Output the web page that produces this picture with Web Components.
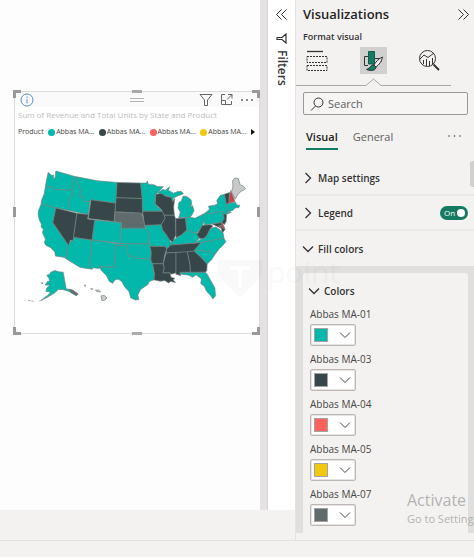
<!DOCTYPE html>
<html lang="en">
<head>
<meta charset="utf-8">
<meta name="viewport" content="width=device-width, initial-scale=1">
<title>Visualizations</title>
<style>
html, body { margin: 0; height: 100%; }
body { font-family: "Open Sans", "Noto Sans", sans-serif; color: #333; background: #fdfdfd; --panel: #f3f2f1; --line: #e3e2e1; --green: #147a61; }
</style>
</head>
<body>
<report-app></report-app>
<script>
const define = (name, html, setup) => {
  const template = document.createElement('template');
  template.innerHTML = '<style>*{box-sizing:border-box}button{font:inherit;color:inherit;background:none;border:0;padding:0;margin:0}svg{display:block;fill:none;stroke:currentColor}</style>' + html;
  customElements.define(name, class extends HTMLElement {
    connectedCallback() {
      if (this.shadowRoot) return;
      this.attachShadow({ mode: 'open' }).append(template.content.cloneNode(true));
      if (setup) setup(this, this.shadowRoot);
    }
  });
};

define('us-map', `
<style>
:host{display:block}
svg{width:100%;stroke:#71827f;stroke-width:2;stroke-linejoin:round}
.t{fill:#01b8aa}.d{fill:#374649}.g{fill:#5f6b6d}.r{fill:#c9434b}.n{fill:#c9c9c9}
</style>
<svg viewBox="0 0 690 450" role="img" aria-label="Map of the United States by product">
<g class="t">
<path d="M84 52L95 61 101 60 99 71 105 68 107 48 163 64 155 104 135 105 118 104 104 103 97 96 76 94 79 76Z"/>
<path d="M76 94L97 96 104 103 118 104 155 104 159 111 150 126 143 165 107 158 63 147 64 136 72 117Z"/>
<path d="M63 147L107 158 98 202 145 270 140 286 142 297 134 306 106 302 104 290 92 277 78 270 73 262 76 251 67 232 70 222 63 215 64 207 57 192 54 176 56 164Z"/>
<path d="M163 64L174 66 171 83 182 106 178 122 187 123 191 138 209 139 204 178 143 165 150 126 159 111 155 104Z"/>
<path d="M174 66L230 77 290 82 286 144 212 134 209 139 191 138 187 123 178 122 182 106 171 83Z"/>
<path d="M223 194L303 202 300 264 215 254Z"/>
<path d="M160 246L215 254 207 340 180 336 134 308 142 297 140 286 145 270 152 256 158 256Z"/>
<path d="M215 254L287 264 283 335 236 334 237 339 217 337 216 341 207 340Z"/>
<path d="M303 218L374 218 378 222 381 226 386 237 386 266 300 264Z"/>
<path d="M287 264L386 266 392 290 391 314 371 309 354 310 338 304 322 300 320 272 287 270Z"/>
<path d="M287 270L320 272 322 300 338 304 354 310 371 309 391 314 396 325 398 340 402 356 400 373 386 378 382 387 360 402 352 418 355 432 345 433 331 427 325 407 314 396 304 378 294 371 284 373 277 383 267 378 258 360 245 347 236 334 283 335Z"/>
<path d="M360 84L378 84 380 78 384 88 400 89 410 94 428 95 406 117 404 132 404 146 412 156 426 168 366 168 365 130Z"/>
<path d="M372 210L422 208 426 224 437 238 447 254 452 267 446 273 438 281 434 273 388 273 386 237 378 222Z"/>
<path d="M411 113L426 103 434 105 447 95 443 105 458 114 472 109 482 109 488 116 474 121 461 127 455 137 450 126Z"/>
<path d="M474 188L479 171 472 158 475 141 482 138 487 123 498 124 511 134 513 147 507 155 515 151 520 166 513 180 508 186Z"/>
<path d="M494 188L508 186 523 189 548 176 551 195 545 210 539 220 528 233 515 231 498 224Z"/>
<path d="M450 269L452 260 466 249 482 239 498 224 515 231 528 233 540 245 522 263 489 266Z"/>
<path d="M522 263L538 253 550 249 559 239 565 226 575 217 585 215 597 223 607 234 609 248 540 262Z"/>
<path d="M540 262L609 248 615 259 605 271 596 279 581 299 565 286 550 289 545 284 519 287 529 275Z"/>
<path d="M519 287L545 284 550 289 565 286 581 299 572 313 559 326 540 305Z"/>
<path d="M478 350L508 350 553 350 559 356 569 374 582 397 584 421 576 430 569 419 557 407 551 393 540 384 542 370 526 358 515 365 505 359 482 356Z"/>
<path d="M548 176L556 171 558 176 603 168 612 178 610 192 604 201 551 209Z"/>
<path d="M556 171L566 162 563 153 582 150 590 146 588 136 598 121 611 117 616 146 619 171 631 171 613 179 603 168 558 176Z"/>
<path d="M616 146L644 141 647 149 656 150 654 157 643 158 636 165 619 171Z"/>
<path d="M80 359L88 357 92 350 104 345 116 349 129 350 138 400 147 401 158 405 172 415 168 420 145 407 128 402 114 402 105 411 92 419 78 427 64 433 84 418 91 410 77 407 81 396 90 389 75 388 82 378 88 377 87 369Z"/>
</g>
<g class="d">
<path d="M107 158L170 174 160 247 158 256 151 254 145 270 98 202Z"/>
<path d="M170 174L204 178 202 191 223 194 215 254 160 246Z"/>
<path d="M212 134L286 144 281 199 204 190Z"/>
<path d="M290 82L360 84 365 130 287 128Z"/>
<path d="M287 128L365 130 366 179 358 173 345 173 284 170Z"/>
<path d="M366 168L426 168 434 188 422 208 372 210Z"/>
<path d="M388 273L434 273 438 281 432 300 428 325 396 325 391 314 392 290Z"/>
<path d="M396 325L428 325 431 337 427 352 448 352 451 365 463 369 457 373 465 381 450 378 444 382 432 375 419 377 400 373 402 356Z"/>
<path d="M406 117L422 115 436 123 452 127 456 139 462 131 459 155 461 180 430 180 424 165 404 146Z"/>
<path d="M430 180L461 180 464 188 466 238 456 260 447 254 437 238 426 224 422 208 434 188Z"/>
<path d="M465 190L494 188 498 224 482 239 466 247Z"/>
<path d="M438 281L446 273 450 269 489 266 540 262 519 287 500 290 436 293Z"/>
<path d="M436 293L466 291 466 352 452 356 448 352 427 352 431 337 428 325Z"/>
<path d="M466 291L500 289 508 328 509 350 478 350 480 360 466 356Z"/>
<path d="M500 289L519 287 540 305 559 326 558 346 553 350 509 350 508 328Z"/>
<path d="M545 210L570 208 576 212 566 224 559 239 550 249 538 250 528 238 539 220Z"/>
<path d="M574 206L603 202 608 219 613 221 605 233 600 217 593 215 585 211Z"/>
<path d="M607 174L617 179 616 198 610 208 603 201 610 190Z"/>
<path d="M611 117L626 112 624 144 616 146Z"/>
</g>
<path class="g" d="M284 170L345 173 358 173 366 180 374 218 303 218 303 202 281 199Z"/>
<path class="r" d="M630 106L642 139 624 144 626 119ZM603 202L612 219 608 221 602 215ZM594 209L602 211 598 219Z"/>
<path class="n" d="M632 110L636 94 635 77 641 69 652 70 658 90 665 91 674 101 660 109 651 117 643 132Z"/>
<g class="n"><path d="M242 421L251 419 260 427 251 435 244 434ZM225 404L234 403 241 409 230 408ZM211 399L218 400 214 402ZM191 389L196 389 195 393ZM64 381L69 382 67 385ZM24 434L31 435M34 436L41 437M58 436L67 434"/><path fill="#5f6b6d" d="M148 401L158 404 174 415 168 420 152 411Z"/></g>
</svg>`);

define('legend-item', `
<style>
:host{display:flex;align-items:center;gap:1px;white-space:nowrap}
i{width:7px;height:7px;border-radius:50%;background:var(--c)}
</style><i></i><span><slot></slot></span>`);

define('map-visual', `
<style>
:host{display:block;position:relative;border:1px solid #dcdcdc;background:#fff;color:#666}
header{display:flex;justify-content:space-between;align-items:center;height:15px;padding:0 5px;background:#fafafa}
header div{display:flex;gap:7px;align-items:center}
button{display:block}
.info{color:#5c8fc4}
h2{margin:0 0 0 3px;font-size:8px;line-height:16px;font-weight:400;color:#bdbdbd;white-space:nowrap;overflow:hidden}
.legend{display:flex;align-items:center;justify-content:space-between;margin:0 4px 0 3px;font-size:7px;line-height:18px;color:#444}
us-map{margin:14px 8px 0 5px;padding-bottom:27px}
.h{position:absolute;width:8px;height:8px;border:0 solid #999}
.tl{left:-2px;top:-2px;border-width:3px 0 0 3px}.tr{right:-1px;top:-2px;border-width:3px 3px 0 0}
.bl{left:-2px;bottom:-2px;border-width:0 0 3px 3px}.br{right:-1px;bottom:-2px;border-width:0 3px 3px 0}
.tm,.bm{left:calc(50% - 5px);width:10px;height:3px;background:#aaa}.tm{top:-2px}.bm{bottom:-2px}
.lm,.rm{top:calc(50% - 5px);width:3px;height:10px;background:#999}.lm{left:-2px}.rm{right:-1px}
.grip{position:absolute;left:calc(50% - 7px);top:6px;width:14px;height:4px;border:solid #b4b4b4;border-width:1px 0}
</style>
<header>
<button class="info" aria-label="Information"><svg width="14" height="14" viewBox="0 0 14 14"><circle cx="7" cy="7" r="6"/><path d="M7 6V10.500M7 3.500V5"/></svg></button>
<div>
<button aria-label="Filter"><svg width="14" height="14" viewBox="0 0 14 14"><path d="M1 1.500H13L8.500 7V12.500H5.500V7Z"/></svg></button>
<button aria-label="Focus mode"><svg width="13" height="13" viewBox="0 0 13 13"><path d="M5 1.500H1.500V11.500H11.500V8M8 1.500H12V5.500M12 1.500L7 6.500M1.500 7.500H5.500V11.500"/></svg></button>
<button aria-label="More options"><svg width="14" height="14" viewBox="0 0 14 14"><g fill="#666" stroke="none"><circle cx="2" cy="7" r="1"/><circle cx="7" cy="7" r="1"/><circle cx="12" cy="7" r="1"/></g></svg></button>
</div>
</header>
<h2>Sum of Revenue and Total Units by State and Product</h2>
<div class="legend"><span>Product</span>
<legend-item style="--c:#01b8aa">Abbas MA...</legend-item>
<legend-item style="--c:#374649">Abbas MA...</legend-item>
<legend-item style="--c:#fd625e">Abbas MA...</legend-item>
<legend-item style="--c:#f2c80f">Abbas MA...</legend-item>
<button aria-label="Next legend items"><svg width="4" height="6" viewBox="0 0 4 6"><path fill="#111" stroke="none" d="M0 0L4 3 0 6Z"/></svg></button></div>
<us-map></us-map>
<span class="grip"></span>
<i class="h tl"></i><i class="h tr"></i><i class="h bl"></i><i class="h br"></i><i class="h tm"></i><i class="h bm"></i><i class="h lm"></i><i class="h rm"></i>`);

define('filters-rail', `
<style>
:host{display:flex;flex-direction:column;align-items:center;gap:13px;width:27px;padding-top:9px;background:#fff}
button{display:block}
h2{margin:0;writing-mode:vertical-rl;font-size:12px;line-height:16px;font-weight:600;margin-top:-7px}
</style>
<button aria-label="Expand filters"><svg width="11" height="11" viewBox="0 0 11 11"><path d="M5.500 .5L.5 5.500 5.500 10.500M10.500 .5L5.500 5.500 10.500 10.500"/></svg></button>
<svg width="11" height="11" viewBox="0 0 11 11"><path stroke-width="1.200" d="M10 1V10L6 6.500H1V4.500H6Z"/></svg>
<h2>Filters</h2>`);

define('format-section', `
<style>
:host{display:flex;align-items:center;height:35px;padding:0 6px 0 8px;border-bottom:2px solid #eae9e8}
:host([open]){border:0}
button{display:flex;align-items:center;gap:6px;font-size:10px;line-height:16px;font-weight:600;flex:1}
:host([open]) svg{transform:rotate(90deg)}
</style>
<button><svg width="8" height="12" viewBox="0 0 8 12"><path stroke-width="1.300" d="M1.500 1L6.500 6 1.500 11"/></svg><slot></slot></button><slot name="end"></slot>`,
(el, root) => root.querySelector('button').setAttribute('aria-expanded', el.hasAttribute('open')));

define('toggle-switch', `
<style>
:host{display:block}
label{display:flex;align-items:center;justify-content:space-between;width:28px;height:14px;padding:0 3px 0 4px;border-radius:7px;background:var(--green);color:#fff;font-size:8px;line-height:14px}
input{appearance:none;width:8px;height:8px;margin:0;border-radius:50%;background:#fff}
</style>
<label>On<input type="checkbox" role="switch" checked aria-label="Legend"></label>`);

define('color-picker', `
<style>
:host{display:flex;flex-direction:column;align-items:flex-start;gap:2px;font-size:10px;line-height:16px;color:#484644}
button{display:flex;align-items:center;justify-content:space-between;width:46px;height:22px;padding:0 4px 0 3px;border:1px solid #bdb7b6;border-radius:2px;background:#fff;box-shadow:inset 0 0 0 1px #e6e2e1}
i{width:14px;height:14px;background:var(--c);border:1px solid #a7a3a2}
</style>
<span id="l"><slot></slot></span>
<button aria-labelledby="l" aria-haspopup="true"><i></i><svg width="12" height="8" viewBox="0 0 12 8"><path d="M1 1.500L6 6.500 11 1.500"/></svg></button>`);

define('format-pane', `
<style>
:host{display:flex;flex-direction:column;width:178px;background:var(--panel);position:relative}
.title{display:flex;justify-content:space-between;align-items:center;padding:4px 5px 0 7px}
h1{margin:0;font-size:13px;line-height:20px;font-weight:600;color:#252423}
.sub{margin:0;padding:5px 7px 0;font-size:9px;line-height:16px;font-weight:600}
.modes{display:flex;justify-content:space-between;margin:2px 31px 0 7px}
.modes button{display:grid;place-items:center;width:27px;height:27px}
.modes .on{background:#d0d0d0}
.notch{color:#a9a7a5}.notch svg{width:100%;height:12px}
.search{display:flex;align-items:center;gap:4px;height:23px;margin:6px 6px 0 7px;padding:0 6px;border:1px solid #999;border-radius:2px;background:#f6f5f4}
.search svg{flex:none}
input{flex:1;min-width:0;border:0;padding:0;background:none;font:inherit;font-size:11px;line-height:16px;outline:0}
input::placeholder{color:#605e5c;opacity:1}
.tabs{display:flex;align-items:flex-start;gap:15px;margin:13px 13px 11px 10px;font-size:11px;line-height:18px;color:#605e5c}
.tabs .on{font-weight:600;color:#252423;border-bottom:2px solid var(--green);padding-bottom:2px}
.tabs .more{margin-left:auto;padding-top:2px}
.body{flex:1;padding:7px 6px 0 7px;background:#e0dfde;margin-bottom:7px}
.card{display:flex;flex-direction:column;gap:5px;height:100%;padding:0 7px;border-radius:3px 3px 0 0;background:var(--panel)}
.card format-section{padding:0;margin-bottom:-7px;height:35px}
.thumb{position:absolute;right:0;top:161px;width:4px;height:26px;border-radius:3px 0 0 3px;background:#d2d0ce}
</style>
<div class="title"><h1>Visualizations</h1><button aria-label="Collapse"><svg width="11" height="11" viewBox="0 0 11 11"><path d="M.5 .5L5.500 5.500 .5 10.500M5.500 .5L10.500 5.500 5.500 10.500"/></svg></button></div>
<p class="sub">Format visual</p>
<div class="modes">
<button aria-label="Build visual"><svg width="22" height="22" viewBox="0 0 22 22"><path stroke-width="1.300" d="M1 1.500H17"/><path stroke-dasharray="2 1" d="M1 6.500H21V12.500H1ZM1 15.500H21V20.500H1Z"/></svg></button>
<button class="on" aria-label="Format visual"><svg width="22" height="22" viewBox="0 0 22 22"><path d="M6 6.500H2.500V15.500H6M12 8.500H19V12"/><path fill="#147a61" stroke="#105d4a" d="M6.500 1.500H12.500V14H6.500Z"/><path fill="#eee" d="M20.500 7C17 8.500 13.500 12 12 15L14 17C17 15 20 11 20.500 7Z"/><path fill="#147a61" stroke="#333" d="M12 15C9 14 9 18 4.500 19.500C9 21.500 14 20.500 14 17Z"/></svg></button>
<button aria-label="Analytics"><svg width="23" height="23" viewBox="0 0 23 23"><circle cx="9.500" cy="9.500" r="8"/><path d="M2 10L6 6 10 8.500 16 4M5.500 15V11M8.500 17V10M11.500 17V12M14.500 15V9"/><path stroke-width="2" d="M15.500 15.500L21 21"/></svg></button>
</div>
<div class="notch"><svg viewBox="0 0 178 12" preserveAspectRatio="none"><path d="M0 11.500H70L77.500 5 85 11.500H155"/></svg></div>
<label class="search"><svg width="14" height="14" viewBox="0 0 14 14"><circle cx="8.500" cy="5.500" r="4.500"/><path d="M5.500 9L1 13.500"/></svg><input type="search" placeholder="Search" aria-label="Search"></label>
<div class="tabs"><button class="on">Visual</button><button>General</button><button class="more" aria-label="More options"><svg width="13" height="12" viewBox="0 0 13 12"><g fill="#444" stroke="none"><circle cx="1" cy="6" r=".8"/><circle cx="6.500" cy="6" r=".8"/><circle cx="12" cy="6" r=".8"/></g></svg></button></div>
<format-section>Map settings</format-section>
<format-section>Legend<toggle-switch slot="end"></toggle-switch></format-section>
<format-section open>Fill colors</format-section>
<div class="body"><div class="card">
<format-section open>Colors</format-section>
<color-picker style="--c:#01b8aa">Abbas MA-01</color-picker>
<color-picker style="--c:#374649">Abbas MA-03</color-picker>
<color-picker style="--c:#fd625e">Abbas MA-04</color-picker>
<color-picker style="--c:#f2c80f">Abbas MA-05</color-picker>
<color-picker style="--c:#5f6b6d">Abbas MA-07</color-picker>
</div></div>
<i class="thumb"></i>`);

define('report-app', `
<style>
:host{display:flex;flex-direction:column;min-height:100%;position:relative;overflow:hidden}
main{flex:1;display:flex;border-bottom:1px solid var(--line)}
.left{flex:1;min-width:0;display:flex;flex-direction:column;border-right:1px solid var(--line)}
.row{flex:1;display:flex}
.canvas{flex:1;min-width:0;padding:91px 0 0 14px}
.split{width:8px;background:#e4e2e2;border-right:1px solid #d6d4d4}
.pad{height:30px;background:var(--panel)}
footer{height:16px;background:var(--panel);margin-bottom:2px}
.mark{position:absolute;left:218px;top:260px;display:flex;align-items:flex-start;gap:5px;font-size:30px;line-height:24px;color:#000;opacity:.02;pointer-events:none}
.mark svg{stroke:none}
.activate{position:absolute;left:407px;top:490px;white-space:nowrap;color:#b5b3b2;font-size:11px;line-height:18px;pointer-events:none}
.activate b{display:block;font-size:16px;line-height:20px;font-weight:400}
</style>
<main>
<div class="left"><div class="row"><div class="canvas"><map-visual></map-visual></div><div class="split"></div><filters-rail></filters-rail></div><div class="pad"></div></div>
<format-pane></format-pane>
</main>
<footer></footer>
<div class="mark"><svg width="44" height="38" viewBox="0 0 44 38"><path fill="#000" fill-rule="evenodd" d="M0 0H44V16L22 38 0 16ZM12 6V10H20V27H24V10H32V6Z"/></svg><span>point</span></div>
<div class="activate"><b>Activate</b>Go to Settings</div>`);
</script>
</body>
</html>
